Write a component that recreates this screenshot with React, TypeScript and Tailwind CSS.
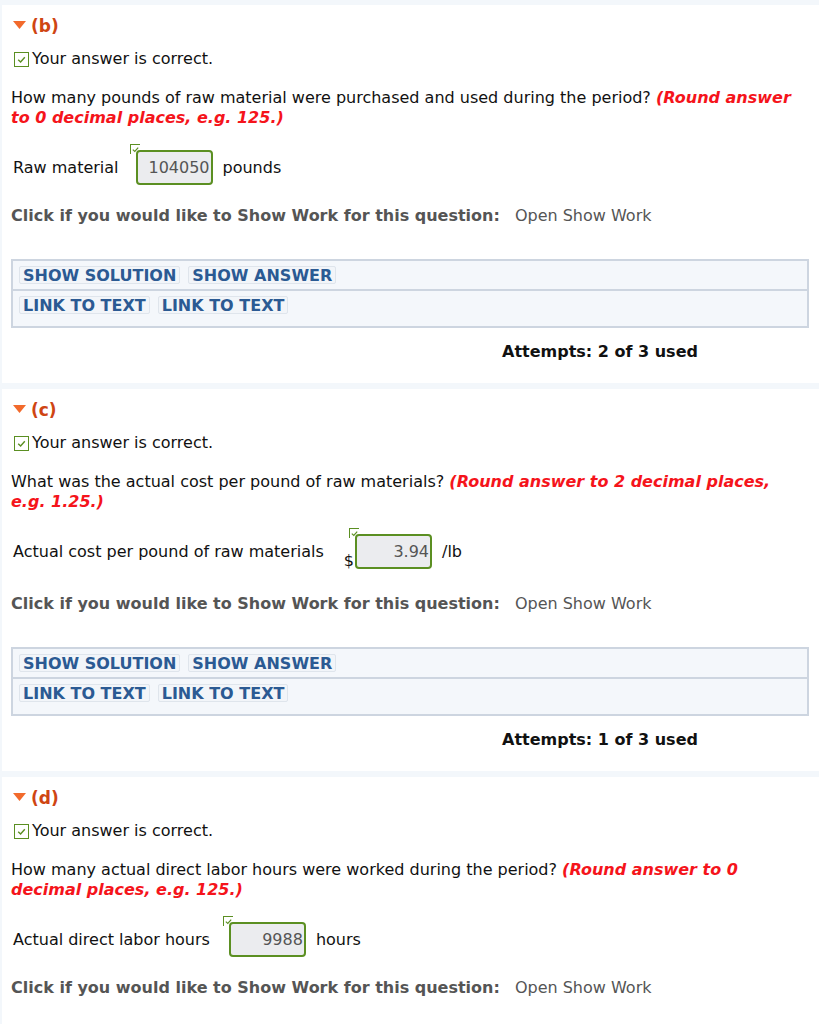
import React from "react";

const FONT = { fontFamily: '"DejaVu Sans", Verdana, sans-serif' };

function Check({ size = 10 }: { size?: number }) {
  return (
    <svg width={size} height={size} viewBox="0 0 10 10">
      <path d="M2 5.2 L4.2 7.2 L8 3" stroke="#5b8f22" strokeWidth="1.3" fill="none" />
    </svg>
  );
}

function Btn({ children }: { children: React.ReactNode }) {
  return (
    <span className="inline-block h-[18px] leading-[17px] px-[3px] rounded-[2px] border border-[#dfe5ec] bg-[#f2f5f9] text-[#2b5a93] font-bold text-[16px]">
      {children}
    </span>
  );
}

type SectionProps = {
  letter: string;
  question: string;
  red: string;
  label: string;
  value: string;
  unit: string;
  dollar?: boolean;
  gap: string;
  attempts?: string;
  last?: boolean;
};

function Section(p: SectionProps) {
  return (
    <div className="pl-[9px] pr-[10px] text-[16px]">
      {/* header */}
      <div className="h-[31px] flex items-end">
        <div className="flex items-center h-[20px] ml-[2px]">
          <svg width="13" height="8" viewBox="0 0 13 8" className="mr-[5px] mt-[-3px]">
            <path d="M0 0 L13 0 L6.5 8 Z" fill="#f26a2c" />
          </svg>
          <span className="text-[#cf4513] font-bold text-[17px] leading-[20px]">({p.letter})</span>
        </div>
      </div>
      {/* correct */}
      <div className="pt-[13px] flex items-center pl-[3px] h-[33px]">
        <span className="w-[15px] h-[15px] border-[1.5px] border-[#5b8f22] flex items-center justify-center mr-[3px] shrink-0">
          <Check size={11} />
        </span>
        <span className="text-[#111] leading-[20px]">Your answer is correct.</span>
      </div>
      {/* question */}
      <div className="pt-[19px] leading-[20px] text-[#111]">
        {p.question}{" "}
        <span className="text-[#f5141b] font-bold italic">{p.red}</span>
      </div>
      {/* input row */}
      <div className={`flex items-center pl-[2px] pt-[22px] ${p.dollar ? "pb-[4px]" : ""}`}>
        <span className="text-[#111]">{p.label}</span>
        <div className={`flex items-end ${p.gap}`}>
          {p.dollar && <span className="text-[#111] leading-[16px] mr-[1px]">$</span>}
          <div className="relative">
            <div className="absolute left-[-6px] top-[-6px] w-[10px] h-[10px] border-l border-t border-[#5b8f22] bg-white flex items-center justify-center">
              <Check size={9} />
            </div>
            <div className="relative w-[77px] h-[35px] rounded-[4px] border-2 border-[#5b8f22] bg-[#ebecef] flex items-center justify-end pr-[1px] text-[#555]">
              {p.value}
            </div>
          </div>
        </div>
        <span className="text-[#111] ml-[10px]">{p.unit}</span>
      </div>
      {/* click */}
      <div className="pt-[21px] flex items-center leading-[20px]">
        <span className="font-bold text-[#555]">Click if you would like to Show Work for this question:</span>
        <span className="text-[#555] ml-[15px]">Open Show Work</span>
      </div>
      {!p.last && (
        <>
          <div className="mt-[33px] border-2 border-[#cdd5e0] bg-[#f4f7fb]">
            <div className="flex gap-[8px] px-[6px] pt-[5px] pb-[5px]">
              <Btn>SHOW SOLUTION</Btn>
              <Btn>SHOW ANSWER</Btn>
            </div>
            <div className="h-[2px] bg-[#cdd5e0]" />
            <div className="flex gap-[8px] px-[6px] pt-[5px] pb-[12px]">
              <Btn>LINK TO TEXT</Btn>
              <Btn>LINK TO TEXT</Btn>
            </div>
          </div>
          <div className="h-[55px] pt-[14px] pl-[491px] font-bold text-[#111] leading-[20px]">
            {p.attempts}
          </div>
        </>
      )}
    </div>
  );
}

export default function App() {
  return (
    <div style={FONT} className="w-[819px] h-[1024px] overflow-hidden bg-white border-l-2 border-[#f3f7fb] box-border">
      <div className="h-[5px] bg-[#f3f7fb] ml-[-2px]" />
      <Section
        letter="b"
        question="How many pounds of raw material were purchased and used during the period?"
        red="(Round answer to 0 decimal places, e.g. 125.)"
        label="Raw material"
        value="104050"
        unit="pounds"
        gap="ml-[17px]"
        attempts="Attempts: 2 of 3 used"
      />
      <div className="h-[6px] bg-[#f3f7fb] ml-[-2px]" />
      <Section
        letter="c"
        question="What was the actual cost per pound of raw materials?"
        red="(Round answer to 2 decimal places, e.g. 1.25.)"
        label="Actual cost per pound of raw materials"
        value="3.94"
        unit="/lb"
        dollar
        gap="ml-[20px]"
        attempts="Attempts: 1 of 3 used"
      />
      <div className="h-[6px] bg-[#f3f7fb] ml-[-2px]" />
      <Section
        letter="d"
        question="How many actual direct labor hours were worked during the period?"
        red="(Round answer to 0 decimal places, e.g. 125.)"
        label="Actual direct labor hours"
        value="9988"
        unit="hours"
        gap="ml-[19px]"
        last
      />
    </div>
  );
}
